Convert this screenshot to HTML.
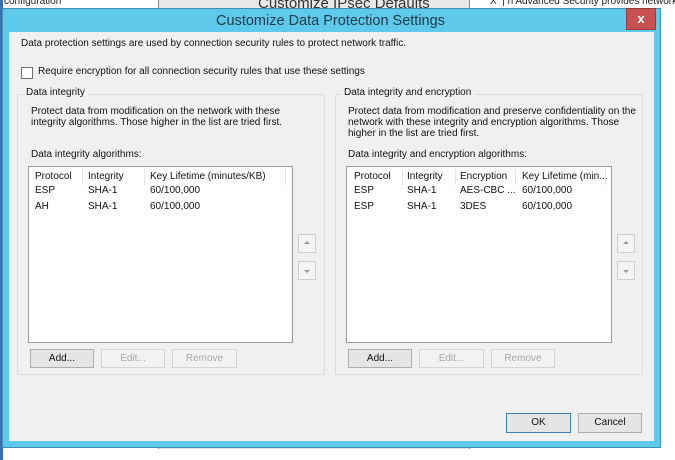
<!DOCTYPE html>
<html><head><meta charset="utf-8"><style>
*{box-sizing:border-box;margin:0;padding:0}
body{width:675px;height:460px;overflow:hidden;background:#fff;font-family:"Liberation Sans",sans-serif;font-size:10px;color:#111;position:relative}
.a{position:absolute;white-space:nowrap}
.btn{position:absolute;border:1px solid #adadad;background:#e5e5e5;text-align:center;line-height:17px;font-size:10px}
.dis{color:#a8a8a8;border-color:#d5d5d5;background:#f2f2f2}
.list{position:absolute;background:#fff;border:1px solid #9a9a9a}
.sep{position:absolute;top:2px;width:1px;height:16px;background:#e3e3e3}
.arr{position:absolute;width:18px;height:19px;border:1px solid #cfcfcf;background:#f4f4f4}
</style></head><body>
<div class="a" style="left:0;top:0;width:160px;height:460px;background:#fff"></div>
<div class="a" style="left:4px;top:-4px;color:#222">configuration</div>
<div class="a" style="left:158px;top:0;width:312px;height:460px;background:#e8e8e8;border-left:1px solid #888;border-right:1px solid #888"></div>
<div class="a" style="left:258px;top:-5px;font-size:15px;color:#333">Customize IPsec Defaults</div>
<div class="a" style="left:490px;top:-4px;color:#222">X &nbsp;| h Advanced Security provides network s</div>
<div class="a" style="left:0;top:449px;width:675px;height:11px;background:#fff"></div>
<div class="a" style="left:0;top:0;width:3px;height:460px;background:#3a6fb0"></div>
<div class="a" style="left:2px;top:8px;width:659px;height:440px;background:#5ec9ea;border:1px solid #3f8fb0"></div>
<div class="a" style="left:0;top:13px;width:661px;text-align:center;font-size:14.5px;color:#1e3a4a">Customize Data Protection Settings</div>
<div class="a" style="left:626px;top:8px;width:30px;height:22px;background:#c75050;border:1px solid #9a3a3a;color:#fff;font-weight:bold;font-size:13px;text-align:center;line-height:19px">x</div>
<div class="a" style="left:9px;top:32px;width:645px;height:409px;background:#f0f0f0"></div>
<div class="a" style="left:21px;top:38px">Data protection settings are used by connection security rules to protect network traffic.</div>
<div class="a" style="left:21px;top:67px;width:12px;height:12px;border:1px solid #707070;background:#fff"></div>
<div class="a" style="left:38px;top:66px">Require encryption for all connection security rules that use these settings</div>
<div class="a" style="left:17px;top:94px;width:308px;height:281px;border:1px solid #dcdcdc;border-radius:2px"></div>
<div class="a" style="left:23px;top:87px;background:#f0f0f0;padding:0 3px">Data integrity</div>
<div class="a" style="left:31px;top:106px;line-height:11px">Protect data from modification on the network with these<br>integrity algorithms.  Those higher in the list are tried first.</div>
<div class="a" style="left:31px;top:149px">Data integrity algorithms:</div>
<div class="list" style="left:28px;top:166px;width:265px;height:177px">
<div class="a" style="left:6px;top:4px">Protocol</div><div class="sep" style="left:53px"></div>
<div class="a" style="left:59px;top:4px">Integrity</div><div class="sep" style="left:115px"></div>
<div class="a" style="left:121px;top:4px">Key Lifetime (minutes/KB)</div><div class="sep" style="left:256px"></div>
<div class="a" style="left:6px;top:18px">ESP</div><div class="a" style="left:59px;top:18px">SHA-1</div><div class="a" style="left:121px;top:18px">60/100,000</div>
<div class="a" style="left:6px;top:34px">AH</div><div class="a" style="left:59px;top:34px">SHA-1</div><div class="a" style="left:121px;top:34px">60/100,000</div>
</div>
<div class="arr" style="left:298px;top:234px"><div class="a" style="left:5px;top:6px;border:3px solid transparent;border-bottom:3px solid #999;border-top:0"></div></div>
<div class="arr" style="left:298px;top:261px"><div class="a" style="left:5px;top:8px;border:3px solid transparent;border-top:3px solid #999;border-bottom:0"></div></div>
<div class="btn" style="left:30px;top:349px;width:64px;height:19px">Add...</div>
<div class="btn dis" style="left:101px;top:349px;width:64px;height:19px">Edit...</div>
<div class="btn dis" style="left:172px;top:349px;width:65px;height:19px">Remove</div>
<div class="a" style="left:335px;top:94px;width:308px;height:281px;border:1px solid #dcdcdc;border-radius:2px"></div>
<div class="a" style="left:341px;top:87px;background:#f0f0f0;padding:0 3px">Data integrity and encryption</div>
<div class="a" style="left:348px;top:106px;line-height:11px">Protect data from modification and preserve confidentiality on the<br>network with these integrity and encryption algorithms.  Those<br>higher in the list are tried first.</div>
<div class="a" style="left:348px;top:149px">Data integrity and encryption algorithms:</div>
<div class="list" style="left:346px;top:166px;width:266px;height:177px">
<div class="a" style="left:7px;top:4px">Protocol</div><div class="sep" style="left:55px"></div>
<div class="a" style="left:60px;top:4px">Integrity</div><div class="sep" style="left:108px"></div>
<div class="a" style="left:113px;top:4px">Encryption</div><div class="sep" style="left:168px"></div>
<div class="a" style="left:175px;top:4px">Key Lifetime (min...</div><div class="sep" style="left:258px"></div>
<div class="a" style="left:7px;top:18px">ESP</div><div class="a" style="left:60px;top:18px">SHA-1</div><div class="a" style="left:113px;top:18px">AES-CBC ...</div><div class="a" style="left:175px;top:18px">60/100,000</div>
<div class="a" style="left:7px;top:34px">ESP</div><div class="a" style="left:60px;top:34px">SHA-1</div><div class="a" style="left:113px;top:34px">3DES</div><div class="a" style="left:175px;top:34px">60/100,000</div>
</div>
<div class="arr" style="left:617px;top:234px"><div class="a" style="left:5px;top:6px;border:3px solid transparent;border-bottom:3px solid #999;border-top:0"></div></div>
<div class="arr" style="left:617px;top:261px"><div class="a" style="left:5px;top:8px;border:3px solid transparent;border-top:3px solid #999;border-bottom:0"></div></div>
<div class="btn" style="left:348px;top:349px;width:64px;height:19px">Add...</div>
<div class="btn dis" style="left:419px;top:349px;width:65px;height:19px">Edit...</div>
<div class="btn dis" style="left:491px;top:349px;width:64px;height:19px">Remove</div>
<div class="btn" style="left:506px;top:413px;width:65px;height:20px;border-color:#3c7fb1;line-height:18px">OK</div>
<div class="btn" style="left:578px;top:413px;width:64px;height:20px;line-height:18px">Cancel</div>
</body></html>
